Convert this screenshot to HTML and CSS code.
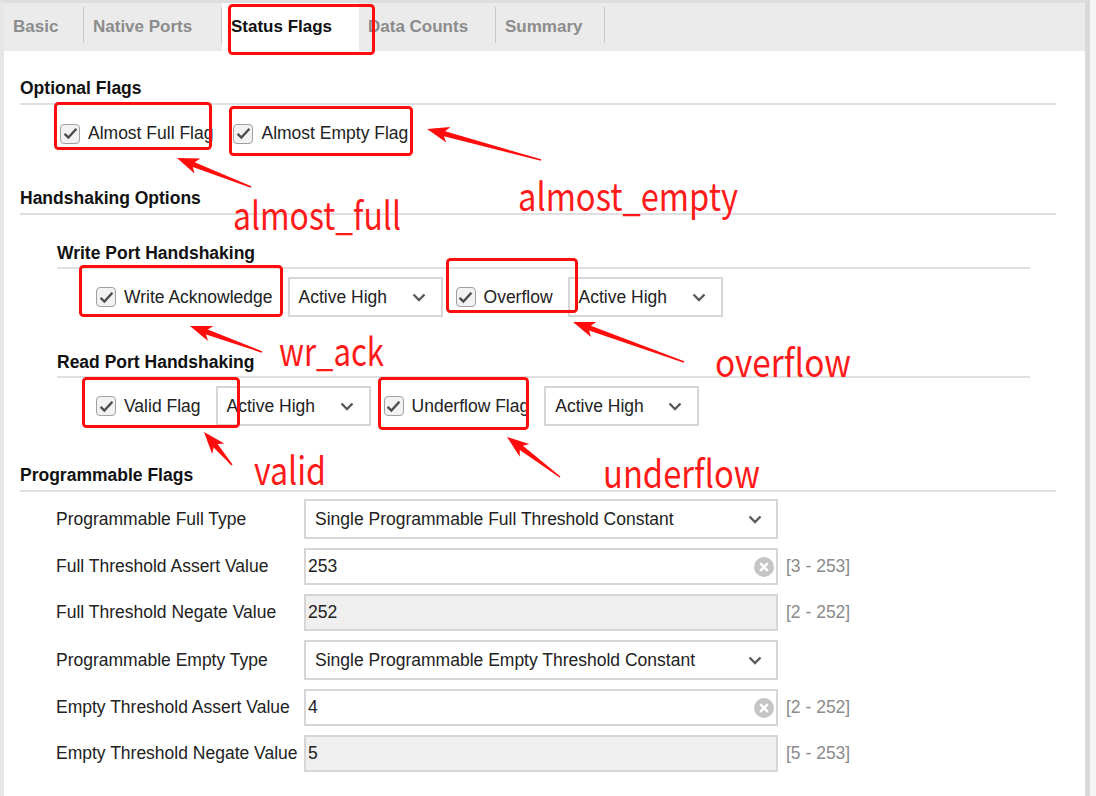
FILE: index.html
```html
<!DOCTYPE html>
<html lang="en">
<head>
<meta charset="utf-8">
<title>Status Flags</title>
<link rel="stylesheet" href="styles.css">
</head>
<body>
<div class="window">
  <div class="panel">
    <div class="tabs">
      <div class="tab tab-basic">Basic</div>
      <div class="tab tab-native">Native Ports</div>
      <div class="tab tab-status tab-active">Status Flags</div>
      <div class="tab tab-data">Data Counts</div>
      <div class="tab tab-summary">Summary</div>
    </div>
    <div class="content">
      <h2 class="heading h-optional">Optional Flags</h2>
      <div class="opt-row">
        <label class="check"><span class="box"><svg width="15" height="13" viewBox="0 0 15 13"><path d="M1.6 6.8 L5.4 10.6 L13.4 1.8" fill="none" stroke="#4d4d4d" stroke-width="2.4"/></svg></span><span>Almost Full Flag</span></label>
        <label class="check"><span class="box"><svg width="15" height="13" viewBox="0 0 15 13"><path d="M1.6 6.8 L5.4 10.6 L13.4 1.8" fill="none" stroke="#4d4d4d" stroke-width="2.4"/></svg></span><span>Almost Empty Flag</span></label>
      </div>

      <h2 class="heading h-handshake">Handshaking Options</h2>
      <div class="subsec">
        <h3 class="heading subheading h-write">Write Port Handshaking</h3>
        <div class="hs-row">
          <label class="check"><span class="box"><svg width="15" height="13" viewBox="0 0 15 13"><path d="M1.6 6.8 L5.4 10.6 L13.4 1.8" fill="none" stroke="#4d4d4d" stroke-width="2.4"/></svg></span><span>Write Acknowledge</span></label>
          <div class="select select-small"><span>Active High</span><svg class="chev" width="14" height="9" viewBox="0 0 14 9"><path d="M1.5 1.5 L7 7 L12.5 1.5" fill="none" stroke="#5a5a5a" stroke-width="2.4"/></svg></div>
          <label class="check"><span class="box"><svg width="15" height="13" viewBox="0 0 15 13"><path d="M1.6 6.8 L5.4 10.6 L13.4 1.8" fill="none" stroke="#4d4d4d" stroke-width="2.4"/></svg></span><span>Overflow</span></label>
          <div class="select select-small"><span>Active High</span><svg class="chev" width="14" height="9" viewBox="0 0 14 9"><path d="M1.5 1.5 L7 7 L12.5 1.5" fill="none" stroke="#5a5a5a" stroke-width="2.4"/></svg></div>
        </div>

        <h3 class="heading subheading h-read">Read Port Handshaking</h3>
        <div class="hs-row">
          <label class="check"><span class="box"><svg width="15" height="13" viewBox="0 0 15 13"><path d="M1.6 6.8 L5.4 10.6 L13.4 1.8" fill="none" stroke="#4d4d4d" stroke-width="2.4"/></svg></span><span>Valid Flag</span></label>
          <div class="select select-small"><span>Active High</span><svg class="chev" width="14" height="9" viewBox="0 0 14 9"><path d="M1.5 1.5 L7 7 L12.5 1.5" fill="none" stroke="#5a5a5a" stroke-width="2.4"/></svg></div>
          <label class="check"><span class="box"><svg width="15" height="13" viewBox="0 0 15 13"><path d="M1.6 6.8 L5.4 10.6 L13.4 1.8" fill="none" stroke="#4d4d4d" stroke-width="2.4"/></svg></span><span>Underflow Flag</span></label>
          <div class="select select-small"><span>Active High</span><svg class="chev" width="14" height="9" viewBox="0 0 14 9"><path d="M1.5 1.5 L7 7 L12.5 1.5" fill="none" stroke="#5a5a5a" stroke-width="2.4"/></svg></div>
        </div>
      </div>

      <h2 class="heading h-prog">Programmable Flags</h2>
      <div class="prog-grid">
        <div class="label">Programmable Full Type</div>
        <div class="select select-wide"><span>Single Programmable Full Threshold Constant</span><svg class="chev" width="14" height="9" viewBox="0 0 14 9"><path d="M1.5 1.5 L7 7 L12.5 1.5" fill="none" stroke="#5a5a5a" stroke-width="2.4"/></svg></div>
        <div class="range"></div>

        <div class="label">Full Threshold Assert Value</div>
        <div class="input"><span>253</span><svg class="clear" width="20" height="20" viewBox="0 0 20 20"><circle cx="10" cy="10" r="10" fill="#c5c5c5"/><path d="M6.2 6.2 L13.8 13.8 M13.8 6.2 L6.2 13.8" stroke="#fff" stroke-width="2.4"/></svg></div>
        <div class="range">[3 - 253]</div>

        <div class="label">Full Threshold Negate Value</div>
        <div class="input input-disabled"><span>252</span></div>
        <div class="range">[2 - 252]</div>

        <div class="label">Programmable Empty Type</div>
        <div class="select select-wide"><span>Single Programmable Empty Threshold Constant</span><svg class="chev" width="14" height="9" viewBox="0 0 14 9"><path d="M1.5 1.5 L7 7 L12.5 1.5" fill="none" stroke="#5a5a5a" stroke-width="2.4"/></svg></div>
        <div class="range"></div>

        <div class="label">Empty Threshold Assert Value</div>
        <div class="input"><span>4</span><svg class="clear" width="20" height="20" viewBox="0 0 20 20"><circle cx="10" cy="10" r="10" fill="#c5c5c5"/><path d="M6.2 6.2 L13.8 13.8 M13.8 6.2 L6.2 13.8" stroke="#fff" stroke-width="2.4"/></svg></div>
        <div class="range">[2 - 252]</div>

        <div class="label">Empty Threshold Negate Value</div>
        <div class="input input-disabled"><span>5</span></div>
        <div class="range">[5 - 253]</div>
      </div>
    </div>
  </div>

  <svg class="annot" width="1096" height="796" viewBox="0 0 1096 796">
    <g class="boxes" fill="none" stroke="#ff0d0d" stroke-width="3">
      <rect x="229.5" y="5.5" width="144" height="48" rx="3"/>
      <rect x="55.5" y="103.5" width="155" height="45" rx="3"/>
      <rect x="230.5" y="107.5" width="181" height="47" rx="3"/>
      <rect x="80.5" y="266.5" width="201" height="49" rx="3"/>
      <rect x="447.5" y="259.5" width="129" height="52" rx="3"/>
      <rect x="83.5" y="378.5" width="155" height="48" rx="3"/>
      <rect x="379.5" y="378.5" width="148" height="50" rx="3"/>
    </g>
    <g class="arrows" fill="#ff0d0d">
      <polygon transform="translate(251 187) rotate(201.4)" points="0,-0.7 61.5,-2.6 57.5,-8 79.5,0 57.5,8 61.5,2.6 0,0.7"/>
      <polygon transform="translate(541 160) rotate(195.2)" points="0,-0.7 100,-2.6 96,-8 118,0 96,8 100,2.6 0,0.7"/>
      <polygon transform="translate(262 352) rotate(199.9)" points="0,-0.7 58.6,-2.6 54.6,-8 76.6,0 54.6,8 58.6,2.6 0,0.7"/>
      <polygon transform="translate(684 362) rotate(199.8)" points="0,-0.7 100,-2.6 96,-8 118,0 96,8 100,2.6 0,0.7"/>
      <polygon transform="translate(232 465) rotate(229.7)" points="0,-0.7 25.3,-2.6 21.3,-8 43.3,0 21.3,8 25.3,2.6 0,0.7"/>
      <polygon transform="translate(560 477) rotate(217)" points="0,-0.7 48.4,-2.6 44.4,-8 66.4,0 44.4,8 48.4,2.6 0,0.7"/>
    </g>
    <g class="notes">
      <text x="233" y="230" textLength="168" lengthAdjust="spacingAndGlyphs">almost_full</text>
      <text x="518" y="211" textLength="220" lengthAdjust="spacingAndGlyphs">almost_empty</text>
      <text x="279" y="366" textLength="105" lengthAdjust="spacingAndGlyphs">wr_ack</text>
      <text x="715" y="377" textLength="136" lengthAdjust="spacingAndGlyphs">overflow</text>
      <text x="254" y="485" textLength="72" lengthAdjust="spacingAndGlyphs">valid</text>
      <text x="603" y="488" textLength="157" lengthAdjust="spacingAndGlyphs">underflow</text>
    </g>
  </svg>
</div>
</body>
</html>
```

FILE: styles.css
```css
html, body {
  margin: 0;
  padding: 0;
}

body {
  background: #f5f5f5;
  font-family: "Liberation Sans", Arial, sans-serif;
  color: #222;
  width: 1096px;
  height: 796px;
  overflow: hidden;
}

.window {
  position: relative;
  width: 1096px;
  height: 796px;
}

.panel {
  box-sizing: border-box;
  width: 1090px;
  height: 796px;
  background: #fff;
  border-top: 3px solid #dedede;
  border-left: 4px solid #e6e6e6;
  border-right: 5px solid #d9d9d9;
}

/* Tabs */
.tabs {
  display: flex;
  height: 48px;
  background: #ebebeb;
}

.tab {
  position: relative;
  box-sizing: border-box;
  display: flex;
  align-items: center;
  padding-left: 9px;
  font-size: 17px;
  font-weight: bold;
  color: #8c8c8c;
  white-space: nowrap;
}

.tab::after {
  content: "";
  position: absolute;
  right: 0;
  top: 4px;
  bottom: 8px;
  width: 1px;
  background: #c9c9c9;
}

.tab-basic { width: 80px; }
.tab-native { width: 138px; }
.tab-status { width: 137px; }
.tab-data { width: 137px; }
.tab-summary { width: 109px; }

.tab-active {
  background: #fff;
  color: #111;
}

.tab-active::after {
  display: none;
}

/* Content */
.content {
  padding: 27px 29px 0 16px;
}

.heading {
  margin: 0;
  font-size: 17.5px;
  font-weight: bold;
  line-height: 20px;
  padding-bottom: 5px;
  border-bottom: 2px solid #e0e0e0;
  color: #111;
  white-space: nowrap;
}

.subheading {
  padding-bottom: 4px;
}

.h-handshake { margin-top: 44px; }
.h-write { margin-top: 28px; }
.h-read { margin-top: 35px; }
.h-prog { margin-top: 39px; }

.subsec {
  margin: 0 26px 0 37px;
}

.check {
  display: flex;
  align-items: center;
  gap: 8px;
  font-size: 17.5px;
  color: #222;
  white-space: nowrap;
}

.box {
  box-sizing: border-box;
  width: 20px;
  height: 20px;
  border: 1.5px solid #a0a0a0;
  border-radius: 4px;
  background: #f2f2f2;
  display: flex;
  align-items: center;
  justify-content: center;
  flex: none;
}

.opt-row {
  display: flex;
  align-items: center;
  gap: 20px;
  height: 21px;
  margin-top: 18px;
  padding-left: 40px;
}

.hs-row {
  display: flex;
  align-items: center;
  margin-top: 8px;
  padding-left: 39px;
}

.hs-row .check {
  margin-right: 15px;
}

.select {
  box-sizing: border-box;
  display: flex;
  align-items: center;
  justify-content: space-between;
  height: 40px;
  border: 2px solid #d6d6d6;
  background: #fff;
  padding: 0 15px 0 9px;
  font-size: 17.5px;
  color: #222;
  white-space: nowrap;
}

.select-small {
  width: 155px;
  margin-right: 13px;
}

.select-wide {
  width: 474px;
  padding-right: 14px;
}

.chev {
  flex: none;
}

.prog-grid {
  display: grid;
  grid-template-columns: 240px 474px max-content;
  column-gap: 8px;
  row-gap: 9px;
  align-items: center;
  margin-top: 7px;
  padding-left: 36px;
}

.label {
  font-size: 17.5px;
  color: #222;
  white-space: nowrap;
}

.input {
  box-sizing: border-box;
  display: flex;
  align-items: center;
  justify-content: space-between;
  height: 37px;
  border: 2px solid #d6d6d6;
  background: #fff;
  padding: 0 2px 0 2px;
  font-size: 17.5px;
  color: #222;
}

.input-disabled {
  background: #efefef;
}

.clear {
  flex: none;
}

.range {
  font-size: 17.5px;
  color: #8b8b8b;
  white-space: nowrap;
}

/* Annotation overlay */
.annot {
  position: absolute;
  left: 0;
  top: 0;
  pointer-events: none;
}

.notes text {
  font-family: "Noto Sans CJK SC", "Noto Sans", sans-serif;
  font-size: 38px;
  font-weight: 400;
  fill: #ff1a1a;
}
```
